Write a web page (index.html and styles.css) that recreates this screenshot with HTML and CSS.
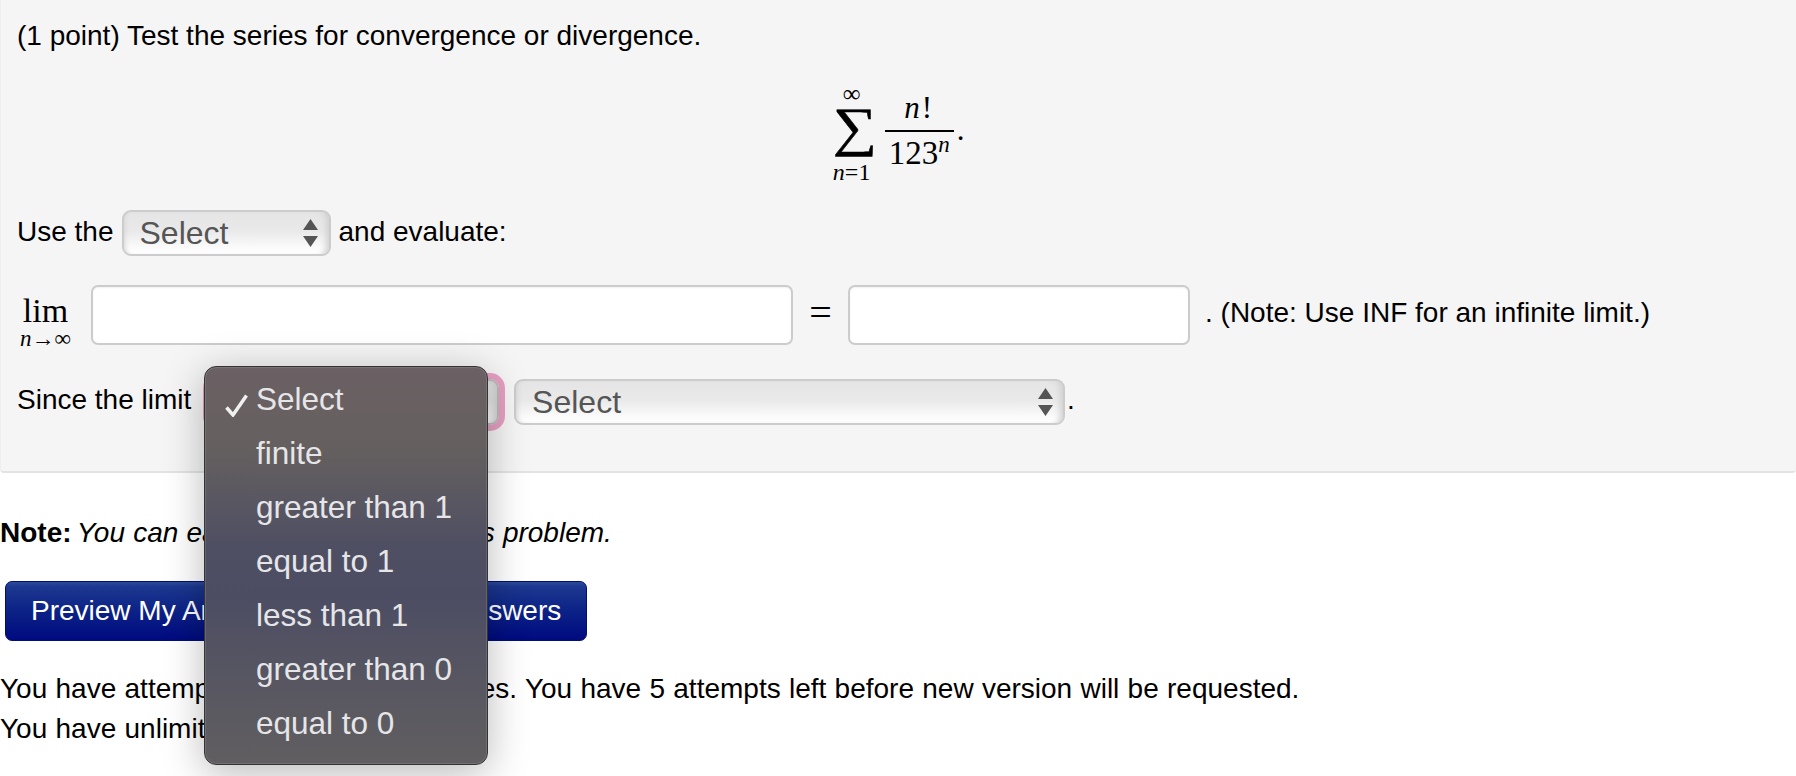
FILE: index.html
```html
<!DOCTYPE html>
<html lang="en">

<head>
    <meta charset="UTF-8">
    <meta name="viewport" content="width=device-width, initial-scale=1.0">
    <title>Series convergence problem</title>
    <link rel="stylesheet" href="styles.css">
</head>

<body>
    <div class="page">
        <div class="problem">
            <p class="intro">(1 point) Test the series for convergence or divergence.</p>

            <div class="series">
                <div class="sum">
                    <span class="sum-top">∞</span>
                    <span class="sum-sign">∑</span>
                    <span class="sum-bottom"><i>n</i>=1</span>
                </div>
                <div class="fraction">
                    <span class="numerator"><i>n</i>!</span>
                    <span class="denominator">123<sup><i>n</i></sup></span>
                </div>
                <span class="series-dot">.</span>
            </div>

            <div class="row row-test">
                <span class="label">Use the</span>
                <div class="select-box select-test">
                    <select>
                        <option>Select</option>
                    </select>
                    <svg class="arrows" viewBox="0 0 15 28"><path d="M7.5 0 15 11H0zM0 17h15L7.5 28z" /></svg>
                </div>
                <span class="label">and evaluate:</span>
            </div>

            <div class="row row-limit">
                <div class="lim">
                    <span class="lim-word">lim</span>
                    <span class="lim-under"><i>n</i>→∞</span>
                </div>
                <input class="answer answer-long" type="text">
                <span class="equals">=</span>
                <input class="answer answer-short" type="text">
                <span class="label note">. (Note: Use INF for an infinite limit.)</span>
            </div>

            <div class="row row-since">
                <span class="label">Since the limit</span>
                <div class="select-box select-limit">
                    <select>
                        <option>Select</option>
                    </select>
                </div>
                <span class="label comma">,</span>
                <div class="select-box select-result">
                    <select>
                        <option>Select</option>
                    </select>
                    <svg class="arrows" viewBox="0 0 15 28"><path d="M7.5 0 15 11H0zM0 17h15L7.5 28z" /></svg>
                </div>
                <span class="label stop">.</span>
            </div>
        </div>

        <p class="credit"><b>Note:</b> <i>You can earn partial credit on this problem.</i></p>

        <div class="buttons">
            <button class="btn">Preview My Answers</button>
            <button class="btn">Check Answers</button>
        </div>

        <p class="attempts">You have attempted this problem 0 times. You have 5 attempts left before new version will be requested.<br>You have unlimited attempts.</p>

        <!-- open dropdown of the focused select -->
        <div class="menu">
            <div class="menu-item">
                <svg class="check" viewBox="0 0 23 23"><path d="M1.5 13.5 8 21 21.5 1.5" /></svg>
                Select
            </div>
            <div class="menu-item">finite</div>
            <div class="menu-item">greater than 1</div>
            <div class="menu-item">equal to 1</div>
            <div class="menu-item">less than 1</div>
            <div class="menu-item">greater than 0</div>
            <div class="menu-item">equal to 0</div>
        </div>
    </div>
</body>

</html>
```
FILE: styles.css
```css
* {
    margin: 0;
    padding: 0;
    box-sizing: border-box;
}

body {
    background: #fff;
    color: #000;
    font-family: "Liberation Sans", Arial, sans-serif;
    font-size: 28px;
    line-height: 40px;
    overflow: hidden;
}

.page {
    position: relative;
    height: 776px;
}

/* problem box */
.problem {
    height: 473px;
    padding: 16px 0 0 16px;
    background: #f5f5f5;
    border: 1px solid #eee;
    border-width: 0 0 2px 1px;
    border-bottom-color: #e3e3e3;
    border-radius: 0 0 4px 4px;
}

/* displayed series */
.series {
    display: flex;
    justify-content: center;
    height: 100px;
    margin-top: 28px;
    padding-right: 16px;
    font-family: "Liberation Serif", "Times New Roman", serif;
}

.sum {
    display: flex;
    flex-direction: column;
    align-items: center;
    width: 38px;
}

.sum-top {
    height: 16px;
    font-size: 25px;
    line-height: 20px;
}

.sum-sign {
    height: 60px;
    margin-left: 7px;
    font-size: 54px;
    line-height: 54px;
    transform: scaleX(1.15);
    -webkit-text-stroke: 0.5px #000;
}

.sum-bottom {
    font-size: 24px;
    line-height: 24px;
    white-space: nowrap;
}

.fraction {
    display: flex;
    flex-direction: column;
    align-items: center;
    width: 69px;
    margin: 8px 0 0 14px;
}

.numerator {
    width: 100%;
    height: 40px;
    border-bottom: 2px solid #000;
    text-align: center;
    font-size: 31px;
    line-height: 32px;
    letter-spacing: 2px;
}

.denominator {
    margin-top: 1px;
    font-size: 33px;
    line-height: 40px;
}

.denominator sup {
    font-size: 23px;
    line-height: 0;
}

.series-dot {
    margin: 26px 0 0 3px;
    font-size: 31px;
    line-height: 40px;
}

/* answer rows */
.row {
    display: flex;
    align-items: center;
}

.row-test {
    margin-top: 26px;
    height: 46px;
}

.row-limit {
    margin-top: 29px;
    height: 60px;
}

.row-since {
    margin-top: 34px;
    height: 46px;
}

.label {
    padding-bottom: 2px;
}

.row-since .label {
    padding-bottom: 5px;
}

select {
    width: 100%;
    height: 100%;
    padding-left: 16px;
    appearance: none;
    -webkit-appearance: none;
    border: 2px solid #ccc;
    border-radius: 9px;
    background: linear-gradient(#e5e5e5 0, #e9e9e9 45%, #fbfbfb 85%, #fff 100%);
    box-shadow: inset 5px 0 5px -4px #d6d6d6, inset -7px 0 6px -4px #d0d0d0;
    color: #555;
    font-family: "Liberation Sans", Arial, sans-serif;
    font-size: 32px;
    outline: none;
}

.select-box {
    position: relative;
    height: 46px;
}

.arrows {
    position: absolute;
    top: 9px;
    right: 12px;
    width: 15px;
    height: 28px;
    fill: #555;
}

.select-test {
    width: 209px;
    margin: 0 8px;
}

.select-test .arrows {
    right: 13px;
}

.select-limit {
    width: 290px;
    margin-left: 18px;
    border-radius: 9px;
    box-shadow: 0 0 0 6px #e8a0c2;
}

.select-limit select {
    border-color: #bbb;
}

.comma {
    margin-left: -3px;
}

.select-result {
    width: 551px;
    margin-left: 10px;
}

.stop {
    margin-left: 2px;
}

.lim {
    display: flex;
    flex-direction: column;
    align-items: center;
    width: 57px;
    padding-top: 14px;
    font-family: "Liberation Serif", "Times New Roman", serif;
}

.lim-word {
    font-size: 34px;
    line-height: 34px;
}

.lim-under {
    font-size: 23px;
    line-height: 22px;
    white-space: nowrap;
}

.answer {
    height: 60px;
    border: 2px solid #ccc;
    border-radius: 7px;
    background: #fff;
    box-shadow: inset 0 1px 2px rgba(0, 0, 0, 0.06);
    outline: none;
}

.answer-long {
    width: 702px;
    margin-left: 17px;
}

.equals {
    width: 55px;
    padding-bottom: 4px;
    text-align: center;
    font-family: "Liberation Serif", "Times New Roman", serif;
    font-size: 40px;
}

.answer-short {
    width: 342px;
}

.note {
    margin-left: 15px;
    padding-bottom: 4px;
}

/* below the box */
.credit {
    margin-top: 40px;
    word-spacing: 0.4px;
}

.credit b {
    margin-right: -3px;
}

.buttons {
    display: flex;
    gap: 27px;
    margin: 28px 0 0 5px;
}

.btn {
    height: 60px;
    padding: 0 25px;
    border: 1px solid #001070;
    border-radius: 7px;
    background: linear-gradient(#2c4b9c 0, #1c388f 8%, #0c2287 50%, #000a80 100%);
    color: #fff;
    font-family: "Liberation Sans", Arial, sans-serif;
    font-size: 28px;
    white-space: nowrap;
}

.attempts {
    margin-top: 28px;
    word-spacing: 0.5px;
}

/* native popup list */
.menu {
    position: absolute;
    top: 366px;
    left: 204px;
    width: 284px;
    height: 399px;
    padding-top: 5px;
    border: 1px solid #333;
    border-radius: 12px;
    background: linear-gradient(#6b6064 0, #65605f 20%, #4f4f63 45%, #4c4d63 58%, #5a5961 85%, #605e60 100%);
    box-shadow: inset 0 0 0 1px rgba(255, 255, 255, 0.12), 0 8px 40px rgba(0, 0, 0, 0.28);
    color: #e6e6e8;
    font-size: 31.5px;
}

.menu-item {
    position: relative;
    height: 54px;
    padding-left: 51px;
    line-height: 54px;
}

.check {
    position: absolute;
    top: 22px;
    left: 20px;
    width: 23px;
    height: 23px;
    fill: none;
    stroke: #f0f0f0;
    stroke-width: 3.5;
}
```
